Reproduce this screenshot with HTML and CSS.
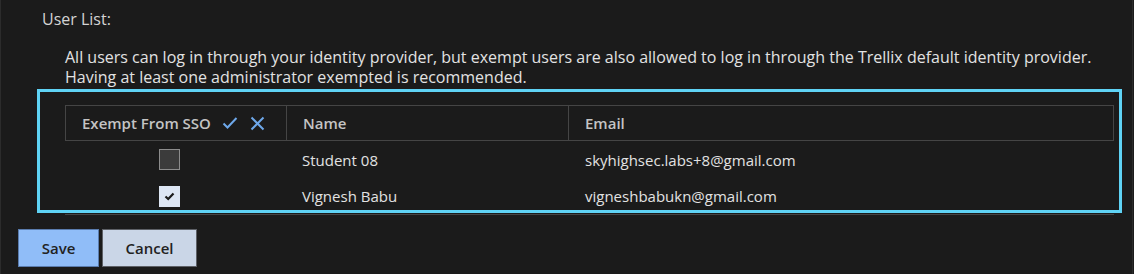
FILE: index.html
```html
<!DOCTYPE html>
<html>
<head>
<meta charset="utf-8">
<link rel="stylesheet" href="styles.css">
</head>
<body>
<div class="page">
  <div class="label">User List:</div>
  <p class="desc">All users can log in through your identity provider, but exempt users are also allowed to log in through the Trellix default identity provider.<br>Having at least one administrator exempted is recommended.</p>
  <div class="table">
    <div class="thead">
      <div class="th c1">Exempt From SSO
        <svg class="hicon" width="16" height="14" viewBox="0 0 16 14"><path d="M1.5 7.5 L5.5 11.5 L14.5 2" fill="none" stroke="#6ea8ea" stroke-width="2"/></svg>
        <svg class="hicon x" width="15" height="15" viewBox="0 0 15 15"><path d="M1.5 1.5 L13.5 13.5 M13.5 1.5 L1.5 13.5" fill="none" stroke="#6ea8ea" stroke-width="2"/></svg>
      </div>
      <div class="th c2">Name</div>
      <div class="th c3">Email</div>
    </div>
    <div class="tr">
      <div class="td c1"><span class="cb"></span></div>
      <div class="td c2">Student 08</div>
      <div class="td c3">skyhighsec.labs+8@gmail.com</div>
    </div>
    <div class="tr">
      <div class="td c1"><span class="cb checked"><svg width="11" height="9" viewBox="0 0 11 9"><path d="M1.5 4.5 L4.2 7 L9.5 1.5" fill="none" stroke="#1b1b1b" stroke-width="2.2"/></svg></span></div>
      <div class="td c2">Vignesh Babu</div>
      <div class="td c3">vigneshbabukn@gmail.com</div>
    </div>
  </div>
  <div class="actions">
    <button class="btn save">Save</button>
    <button class="btn cancel">Cancel</button>
  </div>
  <div class="highlight"></div>
</div>
</body>
</html>
```

FILE: styles.css
```css
html, body {
  margin: 0;
  padding: 0;
  background: #1b1b1b;
}
.page {
  position: relative;
  box-sizing: border-box;
  width: 1133px;
  height: 274px;
  border-left: 1px solid #2c2c2c;
  border-right: 1px solid #2c2c2c;
  font-family: "Open Sans", "Noto Sans", sans-serif;
  font-size: 15px;
  line-height: 20px;
  color: #e0e0e0;
  overflow: hidden;
}
.label {
  padding: 9px 0 0 41px;
  font-size: 16px;
  color: #d4d4d4;
}
.desc {
  margin: 18px 0 0 64px;
  font-size: 16px;
  color: #e2e2e2;
}
.table {
  margin: 18px 0 0 64px;
  width: 1049px;
  border-bottom: 1px solid #454545;
}
.thead {
  display: flex;
  height: 34px;
  border: 1px solid #454545;
  color: #c4c4c4;
  font-weight: 600;
}
.th {
  display: flex;
  align-items: center;
  padding-left: 16px;
  box-sizing: border-box;
}
.th.c1 { width: 221px; border-right: 1px solid #454545; }
.th.c2 { width: 282px; border-right: 1px solid #454545; }
.th.c3 { flex: 1; padding-left: 16px; }
.hicon { margin-left: 11px; }
.hicon.x { margin-left: 12px; }
.tr {
  display: flex;
  height: 37px;
  align-items: center;
  color: #e2e2e2;
}
.tr + .tr { height: 36px; }
.td { box-sizing: border-box; }
.td.c1 { width: 222px; padding-left: 94px; display: flex; align-items: center; }
.td.c2 { width: 282px; padding-left: 15px; }
.td.c3 { flex: 1; padding-left: 16px; }
.cb {
  display: inline-flex;
  align-items: center;
  justify-content: center;
  box-sizing: border-box;
  width: 21px;
  height: 21px;
  background: #3b3b3b;
  border: 1px solid #8c8c8c;
}
.cb.checked {
  background: #dde6f4;
  border-color: #dde6f4;
}
.actions {
  display: flex;
  gap: 3px;
  margin: 14px 0 0 17px;
}
.btn {
  font-family: "Open Sans", "Noto Sans", sans-serif;
  font-size: 15px;
  font-weight: 600;
  color: #222;
  height: 38px;
  padding: 0;
  border: 1px solid #555a62;
  cursor: pointer;
}
.btn.save {
  width: 81px;
  background: #90bdf8;
  border-color: #5a7cae;
}
.btn.cancel {
  width: 95px;
  background: #cad6e7;
  border-color: #5d6066;
}
.highlight {
  position: absolute;
  left: 36px;
  top: 89px;
  width: 1085px;
  height: 124px;
  box-sizing: border-box;
  border: 3px solid #5fd3f5;
  pointer-events: none;
}
```
